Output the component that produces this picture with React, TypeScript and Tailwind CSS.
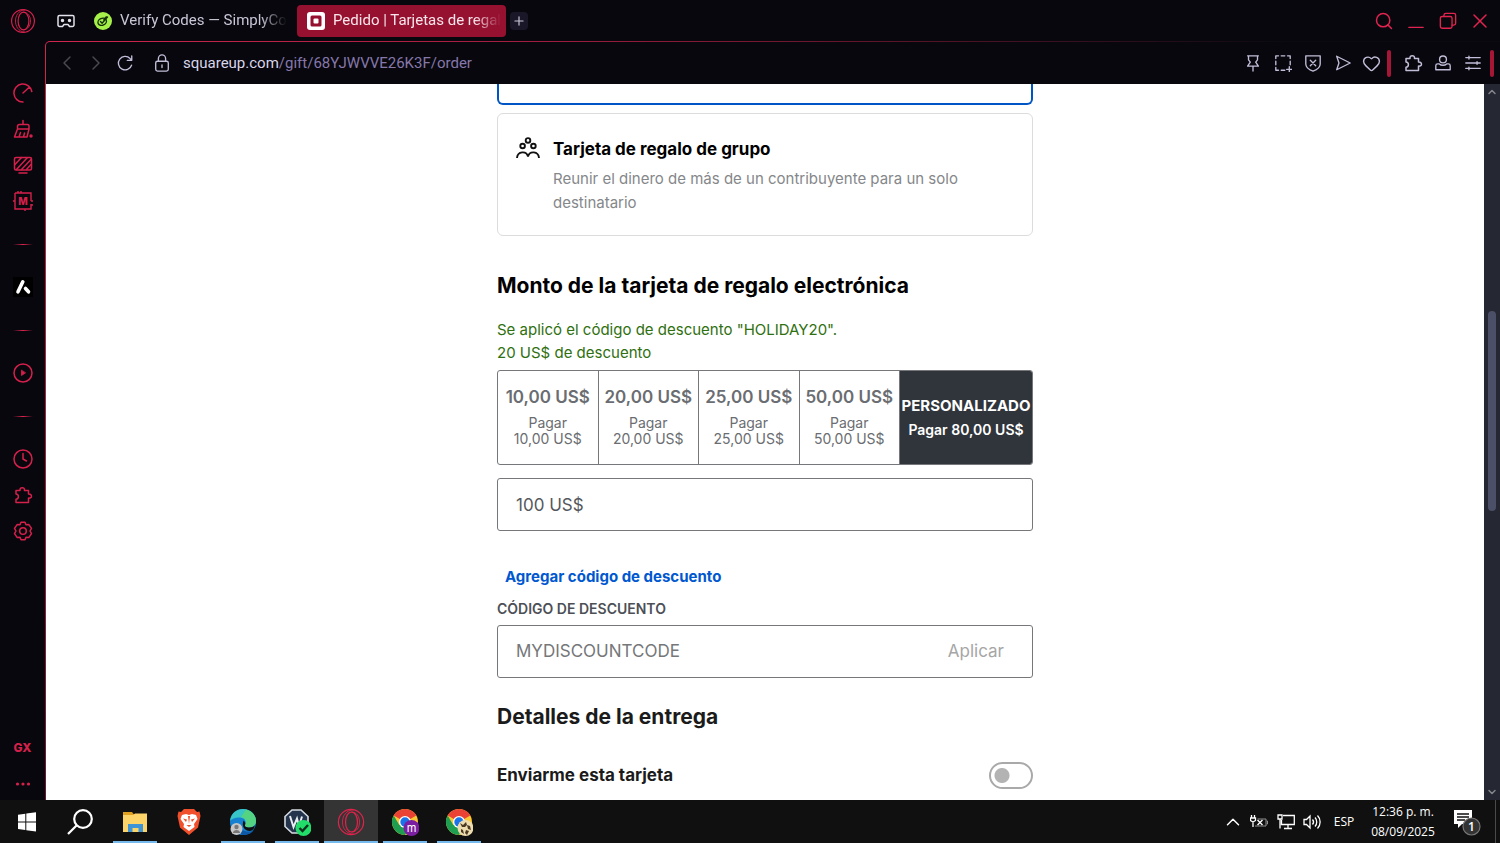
import type { ReactNode } from "react";
import { ChevronDown, ChevronLeft, ChevronRight, ChevronUp, Heart, Plus, Search, X } from "lucide-react";

const amounts = ["10,00 US$", "20,00 US$", "25,00 US$", "50,00 US$"];

const Svg = ({ children, size = 20, sw = 1.5 }: { children: ReactNode; size?: number; sw?: number }) => (
  <svg
    width={size}
    height={size}
    viewBox="0 0 20 20"
    fill="none"
    stroke="currentColor"
    strokeWidth={sw}
    strokeLinecap="round"
    strokeLinejoin="round"
    aria-hidden="true"
  >
    {children}
  </svg>
);

const OperaRing = ({ size }: { size: number }) => (
  <svg width={size} height={size} viewBox="0 0 26 26" fill="none" stroke="#d6204c" strokeWidth="1.2" aria-hidden="true">
    <circle cx="13" cy="13" r="11.4" />
    <ellipse cx="13.5" cy="13" rx="5.4" ry="8.800" />
    <path d="M15 1.800C8 2.500 5.500 8 5.500 13S8 23.500 15 24.200" strokeWidth="0.900" />
    <path d="M13.500 4.200c4 0 7 4 7 8.800s-3 8.800-7 8.800" strokeWidth="0.900" />
  </svg>
);

const PuzzleIcon = () => (
  <Svg>
    <path d="M3 5.500h4c-.6-3.800 5.100-3.800 4.500 0h4v3.600c4-.3 4 4.400 0 4V17.500H3v-3.200c3.200-.2 3.200-5.200 0-5.400z" />
  </Svg>
);

const IconButton = ({ label, className, children }: { label: string; className?: string; children: ReactNode }) => (
  <button type="button" aria-label={label} className={`flex shrink-0 items-center justify-center ${className}`}>
    {children}
  </button>
);

const TabBar = () => (
  <header className="flex h-[41px] shrink-0 items-center bg-[#07070d] font-[Roboto,'Liberation_Sans',sans-serif]">
    <IconButton label="Menú" className="w-[46px]">
      <OperaRing size={26} />
    </IconButton>
    <IconButton label="Espacio de trabajo" className="w-10 text-[#e4e2ec]">
      <Svg size={20}>
        <path d="M3.500 4.500h13a1.500 1.500 0 0 1 1.500 1.500v8a1.500 1.500 0 0 1-1.500 1.500h-3L12 13.500H8l-1.500 2h-3A1.500 1.500 0 0 1 2 14V6a1.500 1.500 0 0 1 1.500-1.500z" />
        <circle cx="6.500" cy="9.500" r="1" fill="currentColor" />
        <circle cx="13.500" cy="9.500" r="1" fill="currentColor" />
      </Svg>
    </IconButton>

    <nav className="flex items-center gap-2 pl-1" aria-label="Pestañas">
      <a href="#verify" className="flex h-8 w-[199px] items-center gap-2 pl-1 text-[15px] text-[#c9c6d6]">
        <svg width="18" height="18" viewBox="0 0 18 18" className="shrink-0" aria-hidden="true">
          <circle cx="9" cy="9" r="9" fill="#a6f04a" />
          <g fill="none" stroke="#14300c" strokeWidth="1.400" strokeLinecap="round">
            <ellipse cx="8.200" cy="9.800" rx="4.400" ry="3.400" transform="rotate(-25 8.200 9.800)" />
            <path d="M6.500 9.500l1.600 1.800L13.500 5M9.800 8l2.400-3.200" />
          </g>
        </svg>
        <span className="whitespace-nowrap [mask-image:linear-gradient(to_right,#000_84%,transparent)]">
          Verify Codes — SimplyCo
        </span>
      </a>
      <a
        href="#pedido"
        aria-current="page"
        className="flex h-8 w-[209px] items-center gap-2 rounded bg-[#96102f] pl-2.5 text-[15px] text-[#f8e6ec]"
      >
        <svg width="18" height="18" viewBox="0 0 18 18" className="shrink-0" aria-hidden="true">
          <rect width="18" height="18" rx="3" fill="#fff" />
          <rect x="3.500" y="3.500" width="11" height="11" rx="1.500" fill="#96102f" />
          <rect x="6.500" y="6.500" width="5" height="5" rx="1" fill="#fff" />
        </svg>
        <span className="whitespace-nowrap [mask-image:linear-gradient(to_right,#000_84%,transparent)]">
          Pedido | Tarjetas de regal
        </span>
      </a>
    </nav>
    <IconButton label="Nueva pestaña" className="ml-1 size-[18px] rounded bg-[#1a1828] text-[#c9c6d6]">
      <Plus size={14} strokeWidth={2} />
    </IconButton>

    <div className="ml-auto flex items-center text-[#e0244f]">
      <IconButton label="Buscar pestañas" className="w-8">
        <Search size={20} strokeWidth={1.8} />
      </IconButton>
      <IconButton label="Minimizar" className="w-8">
        <Svg size={18}>
          <path d="M2 17h16" />
        </Svg>
      </IconButton>
      <IconButton label="Restaurar" className="w-8">
        <Svg size={18}>
          <rect x="1.500" y="5" width="13" height="13" rx="2" />
          <path d="M5.500 5V3.500a2 2 0 0 1 2-2h9a2 2 0 0 1 2 2v9a2 2 0 0 1-2 2h-2" />
        </Svg>
      </IconButton>
      <IconButton label="Cerrar" className="mr-1 w-8">
        <X size={24} strokeWidth={1.5} />
      </IconButton>
    </div>
  </header>
);

const AddressBar = () => (
  <div className="flex h-[42px] shrink-0 items-center rounded-tl-[4px] bg-[#07070d] pl-1.5 text-[#c2bdd8]">
    <IconButton label="Atrás" className="w-[29px] text-[#4a4852]">
      <ChevronLeft size={24} strokeWidth={1.5} />
    </IconButton>
    <IconButton label="Adelante" className="w-[29px] text-[#4a4852]">
      <ChevronRight size={24} strokeWidth={1.5} />
    </IconButton>
    <IconButton label="Recargar" className="w-[30px]">
      <Svg size={18}>
        <path d="M17.300 12.500A7.500 7.500 0 1 1 15.600 5l1.900 1.900M17.500 2v5h-5" />
      </Svg>
    </IconButton>
    <IconButton label="Información del sitio" className="w-[43px]">
      <Svg size={18}>
        <rect x="3" y="8" width="14" height="11" rx="2" />
        <path d="M6 8V5a4 4 0 0 1 8 0v3M10 12v3" />
      </Svg>
    </IconButton>
    <div className="min-w-0 flex-1 truncate font-[Roboto,'Liberation_Sans',sans-serif] text-[15px] leading-6 text-[#8677ab]">
      <span className="text-[#d9d5ea]">squareup.com</span>/gift/68YJWVVE26K3F/order
    </div>

    <div className="flex items-center">
      <IconButton label="Fijar" className="w-[30px]">
        <Svg size={18}>
          <path d="M4 2h12M5 2v4.500L7 9l-3 4.500h12L13 9l2-2.500V2M10 13.500V19" />
        </Svg>
      </IconButton>
      <IconButton label="Captura" className="w-[30px]">
        <Svg size={18}>
          <path d="M2 5V2h3M8 2h4M15 2h3v3M18 8v4M2 8v4M2 15v3h3M8 18h4M17 14v6M14 17h6" />
        </Svg>
      </IconButton>
      <IconButton label="Bloqueador" className="w-[30px]">
        <Svg size={18}>
          <path d="M2 2h16v9c0 4-4 6.500-8 8-4-1.500-8-4-8-8zM7 7l6 6M13 7l-6 6" />
        </Svg>
      </IconButton>
      <IconButton label="Enviar" className="w-[29px]">
        <Svg size={18}>
          <path d="M3 2.500L18 10 3 17.500 5.500 10z" />
        </Svg>
      </IconButton>
      <IconButton label="Favoritos" className="w-[28px]">
        <Heart size={19} strokeWidth={1.8} />
      </IconButton>
      <span className="ml-0.5 mr-[7px] h-[27px] w-1 rounded-sm bg-[#a51637]" />
      <IconButton label="Extensiones" className="w-[30px]">
        <PuzzleIcon />
      </IconButton>
      <IconButton label="Perfil" className="w-[30px]">
        <Svg size={18}>
          <circle cx="10" cy="6" r="3.800" />
          <path d="M6 11H4a2 2 0 0 0-2 2v4.500h16V13a2 2 0 0 0-2-2h-2c-2 2-6 2-8 0z" />
        </Svg>
      </IconButton>
      <IconButton label="Configuración rápida" className="w-[30px]">
        <Svg size={18}>
          <path d="M2 4h16M2 10h16M2 16h16M5.500 2.500v3M14.500 8.500v3M5.500 14.500v3" />
        </Svg>
      </IconButton>
      <span className="ml-0.5 mr-1.5 h-[27px] w-1 rounded-sm bg-[#a51637]" />
    </div>
  </div>
);

const Divider = () => (
  <div className="flex h-[50px] shrink-0 items-center justify-center">
    <span className="h-px w-5 bg-linear-to-r from-transparent via-[#e0244f] to-transparent" />
  </div>
);

const Sidebar = () => (
  <aside className="flex w-[45px] shrink-0 flex-col bg-[#07070d] pt-[34px] text-[#d6204c]">
    <IconButton label="GX Control" className="h-9">
      <Svg>
        <path d="M10 19A9 9 0 1 1 18.800 8.500M10 10l6.500-6" />
      </Svg>
    </IconButton>
    <IconButton label="GX Cleaner" className="h-9">
      <Svg>
        <path d="M10 1.500v4M4.500 10V7.500a2 2 0 0 1 2-2h8a1.500 1.500 0 0 1 1.500 1.500v3zM4.500 10L1.500 18H14l2-8M6 18l1.500-4.500M10.500 18l1-4" />
        <circle cx="18" cy="17" r="1" fill="currentColor" />
      </Svg>
    </IconButton>
    <IconButton label="Fondos" className="h-9">
      <Svg>
        <rect x="1.500" y="2.500" width="17" height="12.500" rx="1.500" />
        <path d="M6 18h8M2 9.500l6.500-7M3.500 14.500L14 3M8.500 14.500L18 4.500M13.500 14.500l4.500-5" />
      </Svg>
    </IconButton>
    <IconButton label="Mods" className="h-9">
      <svg width="20" height="20" viewBox="0 0 20 20" fill="none" stroke="currentColor" strokeWidth="1.400" aria-hidden="true">
        <path d="M2 2h16v8M18 13v5H2V2M0 10h2M18 10h2M5 0v2M8 0v2M12 18v2M18 14h2" />
        <text x="10" y="13.800" textAnchor="middle" fontSize="10" fontWeight="800" fill="currentColor" stroke="none">
          M
        </text>
      </svg>
    </IconButton>
    <Divider />
    <IconButton label="Aria" className="h-9">
      <svg width="20" height="20" viewBox="0 0 20 20" aria-hidden="true">
        <rect width="20" height="20" fill="#000" />
        <path d="M9.800 4.800L5 14.800M12.500 11.500l3 3.300" stroke="#fff" strokeWidth="3.600" strokeLinecap="round" />
      </svg>
    </IconButton>
    <Divider />
    <IconButton label="Reproductor" className="h-9">
      <Svg>
        <circle cx="10" cy="10" r="9" />
        <path d="M8.500 7.500v5l3.800-2.500z" fill="currentColor" strokeWidth="0.800" />
      </Svg>
    </IconButton>
    <Divider />
    <IconButton label="Historial" className="h-9">
      <Svg>
        <circle cx="10" cy="10" r="9" />
        <path d="M10 4.500V10l3.500 2" />
      </Svg>
    </IconButton>
    <IconButton label="Extensiones" className="h-9">
      <PuzzleIcon />
    </IconButton>
    <IconButton label="Configuración" className="h-9">
      <Svg>
        <circle cx="10" cy="10" r="3.300" />
        <path d="M8 1.200h4l1 2.600 2.700-.4 2.800 4L17 10l1.500 2.600-2.800 4-2.700-.4-1 2.600H8l-1-2.600-2.700.4-2.800-4L3 10 1.500 7.400l2.800-4 2.700.4z" />
      </Svg>
    </IconButton>
    <button type="button" className="mt-auto h-9 pb-1 text-xs font-extrabold">
      GX
    </button>
    <IconButton label="Más" className="h-8">
      <svg width="16" height="4" viewBox="0 0 16 4" fill="currentColor" aria-hidden="true">
        <circle cx="2.500" cy="2" r="1.600" />
        <circle cx="8" cy="2" r="1.600" />
        <circle cx="13.500" cy="2" r="1.600" />
      </svg>
    </IconButton>
  </aside>
);

const OrderForm = () => (
  <main className="min-w-0 flex-1 overflow-hidden bg-white">
    <form className="mx-auto flex w-full max-w-[536px] flex-col" onSubmit={(e) => e.preventDefault()}>
      <div className="h-[21px] rounded-b-md border-2 border-t-0 border-[#0055c4]" />

      <section className="mt-2 flex h-[123px] gap-3 rounded-md border border-[#dcdcdc] px-[17px] pt-[23px]">
        <svg
          width="26"
          height="22"
          viewBox="0 0 26 22"
          className="shrink-0"
          fill="none"
          stroke="#111"
          strokeWidth="1.900"
          aria-hidden="true"
        >
          <circle cx="13" cy="3.400" r="2.300" />
          <circle cx="7.600" cy="9" r="2.300" />
          <circle cx="18.400" cy="9" r="2.300" />
          <path d="M2 21c.6-7 9.500-7.400 11-1.500C14.500 13.600 23.400 14 24 21" />
        </svg>
        <div>
          <h3 className="text-[17px] leading-6 font-bold text-black">Tarjeta de regalo de grupo</h3>
          <p className="mt-1.5 text-[15px] leading-6 text-[#85878a]">
            Reunir el dinero de más de un contribuyente para un solo destinatario
          </p>
        </div>
      </section>

      <h2 className="mt-9 text-[21px] leading-7 font-bold text-black">Monto de la tarjeta de regalo electrónica</h2>

      <p className="mt-[18px] text-[15px] leading-[23px] text-[#2f7010]">
        Se aplicó el código de descuento "HOLIDAY20".
        <br />
        20 US$ de descuento
      </p>

      <div className="mt-1.5 grid h-[95px] grid-cols-[repeat(4,1fr)_132px] overflow-hidden rounded-[3px] border border-[#75777a]">
        {amounts.map((amount) => (
          <button
            key={amount}
            type="button"
            className="flex flex-col items-center justify-center border-r border-[#75777a] pb-1 text-[#6a6d71]"
          >
            <span className="text-[17px] leading-6 font-semibold">{amount}</span>
            <span className="mt-1.5 text-sm leading-4">
              Pagar
              <br />
              {amount}
            </span>
          </button>
        ))}
        <button type="button" className="flex flex-col items-center justify-center bg-[#30353c] whitespace-nowrap text-white">
          <span className="text-[15px] leading-6 font-bold">PERSONALIZADO</span>
          <span className="text-sm leading-6 font-semibold">Pagar 80,00 US$</span>
        </button>
      </div>

      <input
        aria-label="Monto personalizado"
        defaultValue="100 US$"
        className="mt-[13px] h-[53px] rounded-[3px] border border-[#75777a] px-[18px] text-[17px] text-[#55585d] outline-none"
      />

      <button type="button" className="mt-[34px] ml-2 self-start text-[15px] leading-6 font-bold text-[#0058d0]">
        Agregar código de descuento
      </button>

      <label htmlFor="discount" className="mt-2.5 text-sm leading-5 font-semibold text-[#4c5056]">
        CÓDIGO DE DESCUENTO
      </label>
      <div className="mt-1.5 flex h-[53px] items-center rounded-[3px] border border-[#75777a] pr-7 pl-[18px]">
        <input
          id="discount"
          placeholder="MYDISCOUNTCODE"
          className="min-w-0 flex-1 text-[17px] outline-none placeholder:text-[#757779]"
        />
        <button type="button" className="text-[17px] text-[#a6a6a6]">
          Aplicar
        </button>
      </div>

      <h2 className="mt-[25px] text-[21px] leading-7 font-bold text-[#1b1b1b]">Detalles de la entrega</h2>

      <div className="mt-[30px] flex items-center justify-between">
        <label htmlFor="send-me" className="text-[17px] leading-7 font-bold text-[#1b1b1b]">
          Enviarme esta tarjeta
        </label>
        <input
          id="send-me"
          type="checkbox"
          role="switch"
          className="h-[27px] w-11 appearance-none rounded-full border-2 border-[#a9a9a9] bg-[radial-gradient(circle_at_11px_50%,#b3b3b3_7px,transparent_8px)]"
        />
      </div>
    </form>
  </main>
);

const Scrollbar = () => (
  <div className="flex w-4 shrink-0 flex-col items-center bg-[#252733] text-[#85858c]">
    <ChevronUp size={12} strokeWidth={3} className="mt-0.5 shrink-0" />
    <div className="flex w-full flex-1 flex-col items-center">
      <div className="basis-[31%]" />
      <div className="w-2 basis-[29%] rounded bg-[#4b4f68]" />
    </div>
    <ChevronDown size={12} strokeWidth={3} className="mb-0.5 shrink-0" />
  </div>
);

const Chrome = () => (
  <>
    <circle cx="13" cy="13" r="13" fill="#fcc934" />
    <path d="M13 13L1.740 6.500A13 13 0 0 1 24.260 6.500z" fill="#ea4335" />
    <path d="M1.740 6.500A13 13 0 0 0 13 26l5.600-9.800L13 13 7.400 16.200z" fill="#1e9e51" />
    <circle cx="13" cy="13" r="6" fill="#fff" />
    <circle cx="13" cy="13" r="4.700" fill="#1a73e8" />
  </>
);

const taskbarApps: { name: string; open?: boolean; active?: boolean; icon: ReactNode }[] = [
  {
    name: "Inicio",
    icon: (
      <g fill="#fff">
        <path d="M4 5.800L11.300 4.800V12.400H4zM12.300 4.600L22 3.200V12.400H12.300zM4 13.400H11.300V21L4 20zM12.300 13.400H22V22.600L12.300 21.200z" />
      </g>
    ),
  },
  {
    name: "Buscar",
    icon: (
      <g fill="none" stroke="#fff" strokeWidth="2.200">
        <circle cx="15" cy="10" r="8.800" />
        <path d="M8.800 16.200L0 25" />
      </g>
    ),
  },
  {
    name: "Explorador de archivos",
    open: true,
    icon: (
      <>
        <path d="M1 3h9l2 2.500h13V8H1z" fill="#e0a020" />
        <path d="M1 6h10l2-1.500h12V23H1z" fill="#fcd468" />
        <path d="M6 23v-8h15v8h-4.500v-4h-6v4z" fill="#3f94d6" />
      </>
    ),
  },
  {
    name: "Brave",
    icon: (
      <>
        <path d="M8 0h10l3 3 2.500-.500L24.500 7 22 18.500 13 26 4 18.500 1.500 7l1-4.500L5 3z" fill="#f0502b" />
        <path d="M6 6l4-1 3 1 3-1 4 1 1.500 4-3.500 5 .5 3L13 22l-5.500-4 .5-3-3.500-5z" fill="#fff" />
        <path d="M7 9.500l4 1-1 2.500zM19 9.500l-4 1 1 2.500zM10.500 16h5L13 18zM12 7h2l-1 8z" fill="#f0502b" />
      </>
    ),
  },
  {
    name: "Microsoft Edge",
    open: true,
    icon: (
      <>
        <circle cx="13" cy="13" r="13" fill="#1681d0" />
        <path d="M0 12C1 4 6.500 0 13 0c7.500 0 13 5.500 13 12 0 4-3 6.500-7 6.500-3 0-4.500-1-4-2.500 1.500-2 1-7-5-7.500C5.500 8.200 2 9.500 0 12z" fill="#37c5c8" />
        <path d="M16 .4C22 2 26 6.500 26 12c0 4-3 6.500-7 6.500-3 0-4.500-1-4-2.500 2-3 1-7-4-8z" fill="#5fd76b" opacity="0.750" />
        <path d="M9 14c0 5.500 5 9 10.500 8.500 2 0 3-.5 4.500-1.500-2 3-6 5-11 5-4-1-6-6-4-12z" fill="#0c57a6" />
        <path d="M13.500 11.500c2 1.500 2.200 3.500 1.500 4.500-.5 1.500 1 2.500 4 2.500 2.500 0 4.500-.8 5.800-2.200-.4 3.500-2 5.200-4.300 5.700-5 .5-9.500-4-7-10.500z" fill="#101010" />
        <circle cx="6.500" cy="20" r="6" fill="#c7c7c7" />
        <circle cx="6.500" cy="18" r="2.200" fill="#777" />
        <path d="M2.800 24a3.800 3.800 0 0 1 7.400 0z" fill="#777" />
      </>
    ),
  },
  {
    name: "Protección",
    open: true,
    icon: (
      <>
        <path d="M8 1h9l7 6.500v10L17 24H8l-7-6.500v-10z" fill="#24344d" stroke="#d5dbe2" strokeWidth="1.600" />
        <path d="M6 7l3.500 11L13 9.500l2 7.500 3-9.500" fill="none" stroke="#e8ecf0" strokeWidth="2" />
        <circle cx="19.500" cy="19" r="8" fill="#22dd69" />
        <path d="M15.500 19l3 3 5.500-6" fill="none" stroke="#10321d" strokeWidth="2.400" />
      </>
    ),
  },
  {
    name: "Opera GX",
    open: true,
    active: true,
    icon: (
      <g fill="none" stroke="#e0224c" strokeWidth="1.200">
        <circle cx="13" cy="13" r="12.600" />
        <ellipse cx="13.500" cy="13" rx="6" ry="10" />
        <path d="M16 .8C8 1 4.500 7 4.500 13s3.500 12 11.500 12.200M13.500 3c5 0 8 4.500 8 10s-3 10-8 10" strokeWidth="0.900" />
      </g>
    ),
  },
  {
    name: "Google Chrome m",
    open: true,
    icon: (
      <>
        <Chrome />
        <circle cx="19.500" cy="19" r="8" fill="#7b1fa2" />
        <text x="19.500" y="22.500" textAnchor="middle" fontSize="11" fill="#fff">
          m
        </text>
      </>
    ),
  },
  {
    name: "Google Chrome",
    open: true,
    icon: (
      <>
        <Chrome />
        <circle cx="19.500" cy="19" r="8" fill="#efdcae" />
        <path d="M14 14l3 2 3-3 1 3-2 2-3 0zM21 16l3 1 1 4-3-1zM15 20l2 1 1 4-3-2zM20 21l3 1-2 4-2-2z" fill="#4a3a24" />
      </>
    ),
  },
];

const Taskbar = () => (
  <footer className="flex h-[43px] shrink-0 bg-[#101010] text-white">
    {taskbarApps.map((app) => (
      <button
        key={app.name}
        type="button"
        aria-label={app.name}
        className={`flex w-[54px] shrink-0 flex-col items-center justify-between pt-2 ${app.active ? "bg-[#343434]" : ""}`}
      >
        <svg width="28" height="28" viewBox="-1 -1 28 28" className="shrink-0" aria-hidden="true">
          {app.icon}
        </svg>
        {app.open && <span className={`h-0.5 bg-[#76b9ed] ${app.active ? "w-full" : "w-11"}`} />}
      </button>
    ))}

    <div className="ml-auto flex items-center font-['Open_Sans','Noto_Sans',sans-serif] text-xs">
      <IconButton label="Mostrar iconos ocultos" className="w-[26px]">
        <ChevronUp size={22} strokeWidth={1.6} />
      </IconButton>
      <IconButton label="Batería" className="w-[26px]">
        <svg width="18" height="14" viewBox="0 0 18 14" fill="none" stroke="currentColor" aria-hidden="true">
          <path d="M1.500 0v3M4.500 0v3M.5 3h5v2.500L3 7 .5 5.500zM3 7v5" strokeWidth="1.300" />
          <path d="M7.500 4h8.500v7H5M16.500 6h1v3h-1" stroke="#909090" />
          <path d="M7.500 5l5 5M12.500 5l-5 5" strokeWidth="1.400" />
        </svg>
      </IconButton>
      <IconButton label="Red" className="w-[27px]">
        <svg width="18" height="16" viewBox="0 0 18 16" fill="none" stroke="currentColor" strokeWidth="1.300" aria-hidden="true">
          <path d="M6 1.500h11.300v9H4.500V6M1 1h4v4H1zM3 5v9.500M11 10.500v4M7 14.500h8" />
        </svg>
      </IconButton>
      <IconButton label="Volumen" className="w-[26px]">
        <svg width="19" height="16" viewBox="0 0 19 16" fill="none" stroke="currentColor" strokeWidth="1.300" aria-hidden="true">
          <path d="M1 5.500h2.500L7 2v12l-3.500-3.500H1zM9.500 5.500c1.300 1.500 1.300 3.500 0 5M12 3.500c2.300 2.500 2.300 6.500 0 9M14.500 1.500c3.500 3.500 3.500 9.500 0 13" />
        </svg>
      </IconButton>
      <button type="button" className="w-[38px]">
        ESP
      </button>
      <time dateTime="2025-09-08T12:36" className="w-20 text-center leading-5">
        12:36 p. m.
        <br />
        08/09/2025
      </time>
      <IconButton label="Notificaciones" className="w-[52px] pr-1">
        <svg width="28" height="28" viewBox="0 0 28 28" aria-hidden="true">
          <path d="M1 2h18v14H9l-4 4v-4H1z" fill="#fff" />
          <path d="M4 6h12M4 9h12M4 12h8" stroke="#101010" strokeWidth="1.400" />
          <circle cx="18.500" cy="18.500" r="8.500" fill="#333" stroke="#777" strokeWidth="1.200" />
          <text x="18.500" y="23" textAnchor="middle" fontSize="12" fontWeight="600" fill="#fff">
            1
          </text>
        </svg>
      </IconButton>
      <span className="mr-1 h-full w-px bg-[#4a4a4a]" />
    </div>
  </footer>
);

const App = () => {
  return (
    <div className="flex h-screen flex-col overflow-hidden bg-[#07070d] font-[Inter,'Liberation_Sans',sans-serif]">
      <TabBar />
      <div className="flex min-h-0 flex-1">
        <Sidebar />
        {/* the 1px padding lets the glow show as the window's edge */}
        <div className="flex min-w-0 flex-1 flex-col rounded-tl-[5px] bg-[radial-gradient(circle_at_left_top,#d0264f,#a01d3f_500px,#0a0a10_1250px)] pt-px pl-px">
          <AddressBar />
          <div className="flex min-h-0 flex-1">
            <OrderForm />
            <Scrollbar />
          </div>
        </div>
      </div>
      <Taskbar />
    </div>
  );
};

export default App;
